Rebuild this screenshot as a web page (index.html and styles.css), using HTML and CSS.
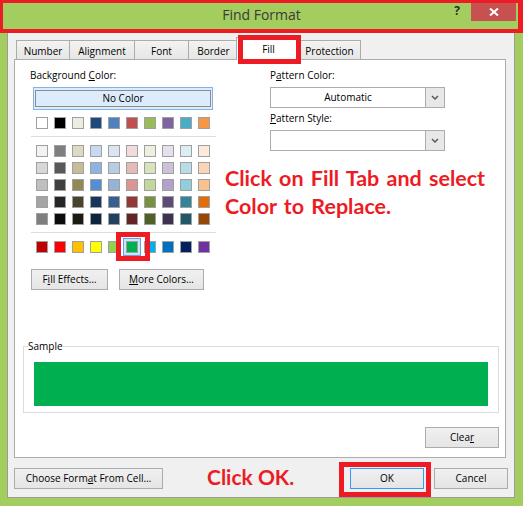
FILE: index.html
```html
<!DOCTYPE html>
<html>
<head>
<meta charset="utf-8">
<link rel="stylesheet" href="styles.css">
</head>
<body>
<div class="window">
  <div class="titlebar">
    <div></div>
    <div class="title">Find Format</div>
    <div class="title-actions">
      <span class="help">?</span>
      <span class="close"><svg width="10" height="8" viewBox="0 0 10 8"><path d="M1 0.5 L9 7.5 M9 0.5 L1 7.5" stroke="#fff" stroke-width="2" fill="none"/></svg></span>
    </div>
  </div>
  <div class="dialog">
    <div class="tabs">
      <div class="tab tab-number">Number</div>
      <div class="tab tab-alignment">Alignment</div>
      <div class="tab tab-font">Font</div>
      <div class="tab tab-border">Border</div>
      <div class="tab tab-active">Fill</div>
      <div class="tab tab-protection">Protection</div>
    </div>
    <div class="panel">
      <div class="panel-top">
        <div class="bg-col">
          <div class="label">Background <u>C</u>olor:</div>
          <div class="nocolor"><span>No Color</span></div>
          <div class="swatches row0">
            <span class="sw" style="background:#ffffff"></span>
            <span class="sw" style="background:#000000"></span>
            <span class="sw" style="background:#eeece1"></span>
            <span class="sw" style="background:#1f497d"></span>
            <span class="sw" style="background:#4f81bd"></span>
            <span class="sw" style="background:#c0504d"></span>
            <span class="sw" style="background:#9bbb59"></span>
            <span class="sw" style="background:#8064a2"></span>
            <span class="sw" style="background:#4bacc6"></span>
            <span class="sw" style="background:#f79646"></span>
          </div>
          <div class="sep"></div>
          <div class="tints">
            <div class="swatches">
              <span class="sw" style="background:#f2f2f2"></span>
              <span class="sw" style="background:#7f7f7f"></span>
              <span class="sw" style="background:#ddd9c3"></span>
              <span class="sw" style="background:#c6d9f0"></span>
              <span class="sw" style="background:#dbe5f1"></span>
              <span class="sw" style="background:#f2dcdb"></span>
              <span class="sw" style="background:#ebf1dd"></span>
              <span class="sw" style="background:#e5e0ec"></span>
              <span class="sw" style="background:#dbeef3"></span>
              <span class="sw" style="background:#fdeada"></span>
            </div>
            <div class="swatches">
              <span class="sw" style="background:#d8d8d8"></span>
              <span class="sw" style="background:#595959"></span>
              <span class="sw" style="background:#c4bd97"></span>
              <span class="sw" style="background:#8db3e2"></span>
              <span class="sw" style="background:#b8cce4"></span>
              <span class="sw" style="background:#e5b9b7"></span>
              <span class="sw" style="background:#d7e3bc"></span>
              <span class="sw" style="background:#ccc1d9"></span>
              <span class="sw" style="background:#b7dde8"></span>
              <span class="sw" style="background:#fbd5b5"></span>
            </div>
            <div class="swatches">
              <span class="sw" style="background:#bfbfbf"></span>
              <span class="sw" style="background:#3f3f3f"></span>
              <span class="sw" style="background:#938953"></span>
              <span class="sw" style="background:#548dd4"></span>
              <span class="sw" style="background:#95b3d7"></span>
              <span class="sw" style="background:#d99694"></span>
              <span class="sw" style="background:#c3d69b"></span>
              <span class="sw" style="background:#b2a2c7"></span>
              <span class="sw" style="background:#92cddc"></span>
              <span class="sw" style="background:#fac08f"></span>
            </div>
            <div class="swatches">
              <span class="sw" style="background:#a5a5a5"></span>
              <span class="sw" style="background:#262626"></span>
              <span class="sw" style="background:#494429"></span>
              <span class="sw" style="background:#17365d"></span>
              <span class="sw" style="background:#366092"></span>
              <span class="sw" style="background:#953734"></span>
              <span class="sw" style="background:#76923c"></span>
              <span class="sw" style="background:#5f497a"></span>
              <span class="sw" style="background:#31859b"></span>
              <span class="sw" style="background:#e36c09"></span>
            </div>
            <div class="swatches">
              <span class="sw" style="background:#7f7f7f"></span>
              <span class="sw" style="background:#0c0c0c"></span>
              <span class="sw" style="background:#1d1b10"></span>
              <span class="sw" style="background:#0f243e"></span>
              <span class="sw" style="background:#244061"></span>
              <span class="sw" style="background:#632423"></span>
              <span class="sw" style="background:#4f6128"></span>
              <span class="sw" style="background:#3f3151"></span>
              <span class="sw" style="background:#205867"></span>
              <span class="sw" style="background:#974806"></span>
            </div>
          </div>
          <div class="sep"></div>
          <div class="swatches std">
            <span class="sw" style="background:#c00000"></span>
            <span class="sw" style="background:#ff0000"></span>
            <span class="sw" style="background:#ffc000"></span>
            <span class="sw" style="background:#ffff00"></span>
            <span class="sw" style="background:#92d050"></span>
            <span class="sw sel" style="background:#00b050"></span>
            <span class="sw" style="background:#00b0f0"></span>
            <span class="sw" style="background:#0070c0"></span>
            <span class="sw" style="background:#002060"></span>
            <span class="sw" style="background:#7030a0"></span>
          </div>
          <div class="btn-row">
            <button class="btn btn-fill">F<u>i</u>ll Effects…</button>
            <button class="btn btn-more"><u>M</u>ore Colors…</button>
          </div>
        </div>
        <div class="pattern-col">
          <div class="label">P<u>a</u>ttern Color:</div>
          <div class="combo">
            <span class="combo-text">Automatic</span>
            <span class="combo-btn"><svg width="8" height="5" viewBox="0 0 8 5"><polyline points="1,1 4,4 7,1" fill="none" stroke="#5a5a5a" stroke-width="1.5"/></svg></span>
          </div>
          <div class="label label-2"><u>P</u>attern Style:</div>
          <div class="combo">
            <span class="combo-text"></span>
            <span class="combo-btn"><svg width="8" height="5" viewBox="0 0 8 5"><polyline points="1,1 4,4 7,1" fill="none" stroke="#5a5a5a" stroke-width="1.5"/></svg></span>
          </div>
        </div>
      </div>
      <fieldset class="sample">
        <legend>Sample</legend>
        <div class="sample-fill"></div>
      </fieldset>
      <div class="clear-row">
        <button class="btn btn-clear">Clea<u>r</u></button>
      </div>
    </div>
    <div class="bottom-row">
      <button class="btn btn-choose">Choose Form<u>a</u>t From Cell…</button>
      <button class="btn btn-ok">OK</button>
      <button class="btn btn-cancel">Cancel</button>
    </div>
  </div>

  <div class="note note-fill">Click on Fill Tab and select<br>Color to Replace.</div>
  <div class="note note-ok">Click OK.</div>

  <div class="mark mark-title"></div>
  <div class="mark mark-tab"></div>
  <div class="mark mark-swatch"></div>
  <div class="mark mark-ok"></div>
</div>
</body>
</html>
```

FILE: styles.css
```css
* { box-sizing: border-box; }
html, body { margin: 0; padding: 0; }
body {
  width: 523px;
  height: 506px;
  overflow: hidden;
  font-family: "Open Sans", "Noto Sans", sans-serif;
  font-size: 10px;
  color: #000;
}
.window {
  position: relative;
  width: 523px;
  height: 506px;
  background: #a3cd5e;
  display: flex;
  flex-direction: column;
}
.titlebar {
  flex: none;
  height: 33px;
  display: grid;
  grid-template-columns: 1fr auto 1fr;
}
.title {
  font-size: 14px;
  line-height: 19px;
  padding-top: 5px;
  color: #3a3a3a;
}
.title-actions {
  display: flex;
  justify-content: flex-end;
  align-items: flex-start;
  padding: 3px 7px 0 0;
}
.help {
  font-weight: 700;
  font-size: 12px;
  line-height: 15px;
  color: #2d2d2d;
  margin-right: 11px;
}
.close {
  width: 45px;
  height: 18px;
  background: #c75050;
  display: flex;
  align-items: center;
  justify-content: center;
}
.close svg { display: block; }

.dialog {
  flex: 1;
  margin: 0 8px 8px 7px;
  background: #f0f0f0;
  border: 1px solid #9c9c9c;
  border-top: 0;
  display: flex;
  flex-direction: column;
}
.tabs {
  flex: none;
  height: 26px;
  display: flex;
  align-items: flex-end;
  padding-left: 8px;
}
.tab {
  height: 19px;
  border: 1px solid #acacac;
  border-bottom: 0;
  margin-right: -1px;
  background: linear-gradient(#f3f3f3, #e6e6e6);
  text-align: center;
  line-height: 20px;
  white-space: nowrap;
}
.tab-number { width: 54px; }
.tab-alignment { width: 66px; }
.tab-font { width: 55px; }
.tab-border { width: 51px; }
.tab-protection { width: 63px; }
.tab-active {
  width: 65px;
  height: 23px;
  margin: 0 -3px -1px -2px;
  background: #fff;
  position: relative;
  z-index: 1;
  line-height: 23px;
}

.panel {
  flex: none;
  margin-left: 6px;
  width: 492px;
  height: 399px;
  border: 1px solid #acacac;
  background: #fff;
  display: flex;
  flex-direction: column;
}
.panel-top {
  display: flex;
  gap: 54px;
  padding: 9px 0 0 15px;
}
.bg-col { width: 186px; }
.pattern-col { width: 175px; }
.label {
  line-height: 13px;
  white-space: nowrap;
}
.nocolor {
  margin: 5px 0 0 3px;
  width: 180px;
  height: 23px;
  border: 1px solid #7eb4ea;
  background: #dcecfc;
  padding: 2px 1px;
}
.nocolor span {
  display: block;
  height: 17px;
  border: 1px solid #8d8d8d;
  text-align: center;
  line-height: 15px;
}
.swatches {
  display: flex;
  gap: 6px;
  margin-left: 6px;
}
.row0 { margin-top: 7px; }
.sw {
  flex: none;
  width: 12px;
  height: 12px;
  border: 1px solid #a0a0a0;
}
.sw.sel {
  box-shadow: 0 0 0 2px #cde5f8, 0 0 0 3px #5fa2e6;
}
.sep {
  width: 185px;
  height: 1px;
  margin: 7px 0 0 1px;
  background: #dedede;
}
.tints {
  margin-top: 8px;
  display: flex;
  flex-direction: column;
  gap: 5px;
}
.std { margin-top: 8px; }
.btn-row {
  display: flex;
  gap: 11px;
  margin: 16px 0 0 1px;
}
.btn {
  height: 21px;
  border: 1px solid #acacac;
  background: linear-gradient(#f0f0f0, #e5e5e5);
  font: inherit;
  color: #000;
  padding: 0;
  line-height: 19px;
  text-align: center;
  white-space: nowrap;
}
.btn-fill { width: 77px; }
.btn-more { width: 85px; }
.btn-clear { width: 74px; }
.btn-choose { width: 149px; }
.btn-ok { width: 74px; margin-left: auto; border-color: #3399ff; }
.btn-cancel { width: 74px; }

.combo {
  margin-top: 5px;
  height: 21px;
  border: 1px solid #acacac;
  background: #fff;
  display: flex;
}
.combo-text {
  flex: 1;
  text-align: center;
  line-height: 19px;
}
.combo-btn {
  width: 19px;
  border-left: 1px solid #acacac;
  background: #e8e8e8;
  display: flex;
  align-items: center;
  justify-content: center;
}
.combo-btn svg { display: block; }
.label-2 { margin-top: 4px; }

.sample {
  margin: 50px 6px 0 8px;
  padding: 0 4px;
  border: 1px solid #dcdcdc;
  min-width: 0;
}
.sample legend {
  padding: 0;
  line-height: 13px;
}
.sample-fill {
  margin: 9px 6px 6px;
  height: 44px;
  background: #00b050;
}
.clear-row {
  display: flex;
  justify-content: flex-end;
  margin: 14px 6px 0 0;
}
.bottom-row {
  display: flex;
  gap: 10px;
  margin-top: 10px;
  padding: 0 6px;
}

.note {
  position: absolute;
  z-index: 5;
  color: #ed1c24;
  font-family: Lato, "Open Sans", sans-serif;
  font-weight: 700;
  font-size: 21px;
  line-height: 28px;
  white-space: nowrap;
}
.note-fill { left: 225px; top: 164px; font-size: 21.5px; word-spacing: 2px; }
.note-ok { left: 207px; top: 463px; }

.mark {
  position: absolute;
  z-index: 5;
  border: 5px solid #ed1c24;
}
.mark-title { left: 0; top: 0; width: 523px; height: 33px; border-width: 3px 5px 4px 3px; }
.mark-tab { left: 238px; top: 35px; width: 63px; height: 29px; }
.mark-swatch { left: 116px; top: 232px; width: 34px; height: 29px; }
.mark-ok { left: 339px; top: 462px; width: 92px; height: 35px; }
```
